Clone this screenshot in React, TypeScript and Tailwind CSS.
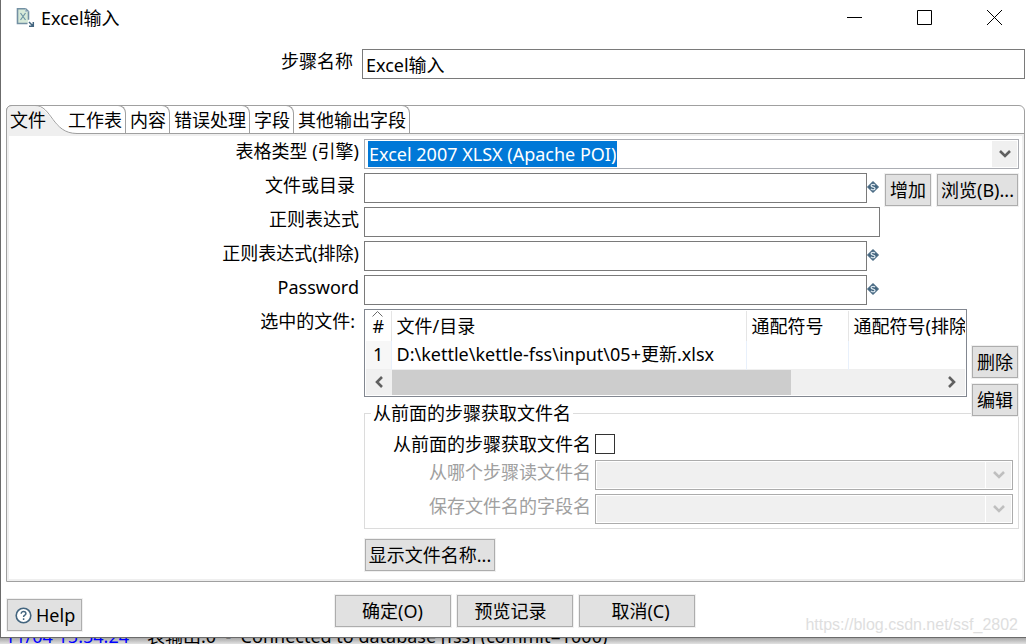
import { useState } from 'react'
import type { ReactNode, ButtonHTMLAttributes } from 'react'
import clsx from 'clsx'

const TABS = ['文件', '工作表', '内容', '错误处理', '字段', '其他输出字段']

const FILES = [{ id: 1, path: 'D:\\kettle\\kettle-fss\\input\\05+更新.xlsx', wildcard: '', exclude: '' }]

function Button({ className, ...props }: ButtonHTMLAttributes<HTMLButtonElement>) {
  return (
    <button
      type="button"
      className={clsx('h-8 shrink-0 whitespace-nowrap border border-[#adadad] bg-[#e1e1e1] ring-1 ring-[#f0f0f0] hover:bg-[#e5f1fb]', className)}
      {...props}
    />
  )
}

function Chevron({ className }: { className?: string }) {
  return (
    <svg width="12" height="10" viewBox="0 0 12 10" fill="none" stroke="currentColor" strokeWidth="2.6" className={className} aria-hidden="true">
      <path d="M1 2l5 5 5-5" />
    </svg>
  )
}

// Marks a field that accepts ${variables}
function VariableMark() {
  return (
    <svg width="12" height="12" viewBox="0 0 12 12" className="mt-2 shrink-0" aria-hidden="true">
      <path d="M6 0.500L11.500 6 6 11.500 0.500 6z" fill="#43657f" stroke="#43657f" strokeLinejoin="round" />
      <path d="M7.900 4.300C7.600 3.600 6.900 3.300 6 3.300c-1.100 0-1.900.5-1.900 1.400C4.100 6.500 8 5.600 8 7.400c0 .8-.8 1.400-2 1.400-1 0-1.700-.4-2-1.100" fill="none" stroke="#dbe6ee" strokeWidth="1.300" />
    </svg>
  )
}

function Row({ label, htmlFor, wide, children }: { label: string; htmlFor: string; wide?: boolean; children: ReactNode }) {
  return (
    <div className="flex h-[30px] items-start">
      <label htmlFor={htmlFor} className={clsx('w-[355px] shrink-0 text-right leading-6', wide ? 'pr-[9px]' : 'pr-[5px]')}>{label}</label>
      <div className="flex min-w-0 flex-1 items-start">{children}</div>
    </div>
  )
}

function TextField({ id, variable, children }: { id: string; variable?: boolean; children?: ReactNode }) {
  return (
    <>
      <input id={id} type="text" className="h-[30px] min-w-0 flex-1 border border-[#7a7a7a] bg-white px-1 outline-none" />
      {variable && <VariableMark />}
      <div className={clsx('flex shrink-0 justify-between pl-[6px] pr-px pt-px', variable ? 'w-[140px]' : 'w-[139px]')}>{children}</div>
    </>
  )
}

function DisabledCombo({ id, label }: { id: string; label: string }) {
  return (
    <div className="flex h-[30px] items-start">
      <label htmlFor={id} className="w-[230px] shrink-0 pr-1 text-right leading-6 text-[#a0a0a0]">{label}</label>
      <div className="relative h-full flex-1 border border-[#acacac] bg-[#f0f0f0] shadow-[inset_0_0_0_1px_#fff]">
        <select id={id} disabled className="h-full w-full appearance-none bg-transparent px-1" />
        <span className="pointer-events-none absolute inset-y-px right-px flex w-[26px] items-center justify-center border-l border-white">
          <Chevron className="text-[#bfbfbf]" />
        </span>
      </div>
    </div>
  )
}

function TitleBar() {
  return (
    <header className="flex h-[35px] items-center pl-[15px] pr-0.5">
      <svg width="19" height="19" viewBox="0 0 19 19" className="shrink-0" aria-hidden="true">
        <path d="M11.500 15.500H1.500V.7h8l3 3v8" fill="#d7ead9" stroke="#7390a3" strokeWidth="1.600" />
        <path d="M9.500.5v3h3" fill="none" stroke="#a9bdc9" />
        <path d="M4.500 5l5 7M9.500 5l-5 7" stroke="#6d93a3" strokeWidth="1.200" />
        <path d="M13 14l4 4M17.300 14v4.300H13" fill="none" stroke="#43657f" strokeWidth="1.500" />
      </svg>
      <h1 className="flex-1 pl-[6px]">Excel输入</h1>
      <div className="flex gap-[10px] self-stretch">
        <button type="button" aria-label="最小化" className="flex w-[60px] items-center justify-center">
          <svg width="15" height="15" viewBox="0 0 15 15" stroke="#000"><path d="M0 7.500h15" /></svg>
        </button>
        <button type="button" aria-label="最大化" className="flex w-[60px] items-center justify-center">
          <svg width="15" height="15" viewBox="0 0 15 15" stroke="#000" fill="none"><path d="M.5.5h14v14H.5z" /></svg>
        </button>
        <button type="button" aria-label="关闭" className="flex w-[60px] items-center justify-center">
          <svg width="15" height="15" viewBox="0 0 15 15" stroke="#000"><path d="M0 0l15 15M15 0L0 15" /></svg>
        </button>
      </div>
    </header>
  )
}

function TabBar({ active, onSelect }: { active: string; onSelect: (tab: string) => void }) {
  return (
    <div role="tablist" className="relative flex h-7 border-b border-[#a0a0a0]">
      {TABS.map((tab, i) => (
        <button
          key={tab}
          type="button"
          role="tab"
          aria-selected={tab === active}
          onClick={() => onSelect(tab)}
          className={clsx('relative whitespace-nowrap', i === 0 ? 'w-[57px] pl-[3px] text-left' : '-mt-px rounded-tr-[8px] border-r border-t border-[#a0a0a0] pl-1 pr-[3px]')}
        >
          {i === 0 && (
            <svg width="71" height="29" viewBox="0 0 71 29" className="absolute -left-px -top-px" aria-hidden="true">
              <path d="M1 29V6Q1 1 6 1H28C44 1 46 28 70 28V29z" fill="#efefef" />
              <path d="M.5 29V6Q.5.5 6 .5H29C46 .5 46 28.500 71 28.500" fill="none" stroke="#a0a0a0" />
            </svg>
          )}
          <span className="relative">{tab}</span>
        </button>
      ))}
    </div>
  )
}

function FileTable() {
  return (
    <div className="h-[88px] min-w-0 flex-1 overflow-hidden border border-[#828790] bg-white p-px">
      <table id="files" className="w-full table-fixed border-collapse text-left">
        <colgroup>
          <col className="w-[25px]" />
          <col />
          <col className="w-[102px]" />
          <col className="w-[117px]" />
        </colgroup>
        <thead>
          <tr className="h-[30px]">
            <th className="border-r border-[#e5e5e5] p-0 text-center font-normal">
              <span className="relative leading-[30px]">
                <svg width="11" height="6" viewBox="0 0 11 6" fill="none" stroke="#6a6a6a" className="absolute -top-[3px] left-0" aria-hidden="true"><path d="M.5 5.500l5-5 5 5" /></svg>
                #
              </span>
            </th>
            <th className="border-r border-[#e5e5e5] p-0 pl-[5px] font-normal">文件/目录</th>
            <th className="border-r border-[#e5e5e5] p-0 pl-[5px] font-normal">通配符号</th>
            <th className="overflow-hidden whitespace-nowrap p-0 pl-[5px] font-normal">通配符号(排除)</th>
          </tr>
        </thead>
        <tbody>
          {FILES.map((f) => (
            <tr key={f.id} className="h-7 border-b border-[#efefef] leading-[27px]">
              <td className="border-r border-[#e8f0fb] bg-[#f7f7f7] p-0 text-center">{f.id}</td>
              <td className="whitespace-nowrap border-r border-[#e8f0fb] p-0 pl-[5px]">{f.path}</td>
              <td className="border-r border-[#e8f0fb] p-0">{f.wildcard}</td>
              <td className="p-0">{f.exclude}</td>
            </tr>
          ))}
        </tbody>
      </table>
      <div className="flex h-[25px] bg-[#f0f0f0]">
        <button type="button" aria-label="向左滚动" className="flex w-[26px] items-center justify-center text-[#606060]"><Chevron className="rotate-90" /></button>
        <div className="flex-1"><div className="h-full w-[73%] bg-[#cdcdcd]" /></div>
        <button type="button" aria-label="向右滚动" className="flex w-[26px] items-center justify-center text-[#606060]"><Chevron className="-rotate-90" /></button>
      </div>
    </div>
  )
}

function FilePanel() {
  return (
    <div role="tabpanel" className="flex-1 space-y-1 border-2 border-[#efefef] bg-white pr-[3px] pt-[3px]">
      <Row label="表格类型 (引擎)" htmlFor="engine">
        <div className="flex h-[30px] flex-1 items-center justify-between border border-[#abadb3] pl-[3px] pr-px">
          <select id="engine" className="h-[26px] appearance-none bg-[#0078d7] px-px leading-6 text-white outline-none field-sizing-content">
            <option>Excel 2007 XLSX (Apache POI)</option>
          </select>
          <button type="button" aria-label="展开" className="flex h-[26px] w-[25px] items-center justify-center bg-[#f0f0f0] text-[#606060]"><Chevron /></button>
        </div>
      </Row>
      <Row label="文件或目录" htmlFor="path" wide>
        <TextField id="path" variable>
          <Button className="w-[46px]">增加</Button>
          <Button className="w-[81px]">浏览(B)...</Button>
        </TextField>
      </Row>
      <Row label="正则表达式" htmlFor="regex"><TextField id="regex" /></Row>
      <Row label="正则表达式(排除)" htmlFor="regexExclude"><TextField id="regexExclude" variable /></Row>
      <Row label="Password" htmlFor="password"><TextField id="password" variable /></Row>
      <div className="relative flex h-[88px] items-start">
        <span className="w-[355px] shrink-0 pr-[9px] text-right leading-6">选中的文件:</span>
        <FileTable />
        <div className="flex w-[52px] shrink-0 flex-col gap-1.5 pl-[5px] pr-px pt-[37px]">
          <Button>删除</Button>
          <Button>编辑</Button>
        </div>
      </div>
      <fieldset className="ml-[355px] border border-[#dcdcdc] pb-1 pr-[5px] pt-px">
        <legend className="ml-[6px] px-[2px] leading-6">从前面的步骤获取文件名</legend>
        <div className="space-y-1">
          <div className="flex h-[30px] items-end">
            <label htmlFor="fromPrevious" className="w-[230px] shrink-0 pr-1 text-right leading-6">从前面的步骤获取文件名</label>
            <input id="fromPrevious" type="checkbox" className="mb-0.5 size-5 appearance-none border border-[#333] bg-white checked:bg-[#333]" />
          </div>
          <DisabledCombo id="sourceStep" label="从哪个步骤读文件名" />
          <DisabledCombo id="sourceField" label="保存文件名的字段名" />
        </div>
      </fieldset>
      <div className="ml-[356px] pb-2 pt-[6px]">
        <Button className="w-[130px]">显示文件名称...</Button>
      </div>
    </div>
  )
}

export default function App() {
  const [tab, setTab] = useState('文件')
  const [stepName, setStepName] = useState('Excel输入')

  return (
    <div className="flex min-h-screen flex-col bg-[#e0e0e0] text-[18px] leading-6 text-black [font-family:'Noto_Sans','Noto_Sans_CJK_SC',sans-serif]">
      <main className="relative flex flex-1 flex-col border-b border-l border-[#6b6b6b] bg-white">
        <TitleBar />
        <div className="mt-[14px] flex items-start pr-px">
          <label htmlFor="stepName" className="w-[361px] shrink-0 pr-[9px] text-right leading-6">步骤名称</label>
          <input id="stepName" value={stepName} onChange={(e) => setStepName(e.target.value)} className="h-[30px] min-w-0 flex-1 border border-[#7a7a7a] px-[3px] outline-none" />
        </div>
        <section className="ml-[5px] mr-px mt-[26px] flex flex-1 flex-col rounded-t-[6px] border border-[#a0a0a0]">
          <TabBar active={tab} onSelect={setTab} />
          <FilePanel />
        </section>
        <footer className="grid grid-cols-[1fr_auto_1fr] items-start pb-[6px] pl-[6px] pr-1 pt-[13px]">
          <Button className="mt-1 flex w-[75px] items-center gap-1 pl-[7px]">
            <svg width="17" height="17" viewBox="0 0 17 17" fill="none" stroke="#43657f" className="shrink-0" aria-hidden="true">
              <circle cx="8.5" cy="8.5" r="7.3" strokeWidth="1.600" fill="#fff" />
              <path d="M6.200 6.700c0-3 4.700-2.800 4.700 0 0 1.500-2.300 1.500-2.300 3.200M8.600 11.300v1.600" strokeWidth="1.500" />
            </svg>
            Help
          </Button>
          <div className="flex gap-[6px]">
            <Button className="w-[116px]">确定(O)</Button>
            <Button className="w-[116px] pr-2">预览记录</Button>
            <Button className="w-[116px] pl-2">取消(C)</Button>
          </div>
        </footer>
        <p className="pointer-events-none absolute bottom-0 right-2 [font-family:'Liberation_Sans',sans-serif] text-[16px] text-[#dedede]">https://blog.csdn.net/ssf_2802</p>
      </main>
      {/* last log line of the window behind the dialog */}
      <div className="flex h-[6px] items-end gap-[18px] overflow-hidden whitespace-pre bg-linear-to-b from-[#a8a8a8] to-[#e2e2e2] pl-[5px] leading-[16px]">
        <span className="text-[#0000ff]">11/04 15:54:24</span>
        <span>表输出.0  -  Connected to database [fss] (commit=1000)</span>
      </div>
    </div>
  )
}
